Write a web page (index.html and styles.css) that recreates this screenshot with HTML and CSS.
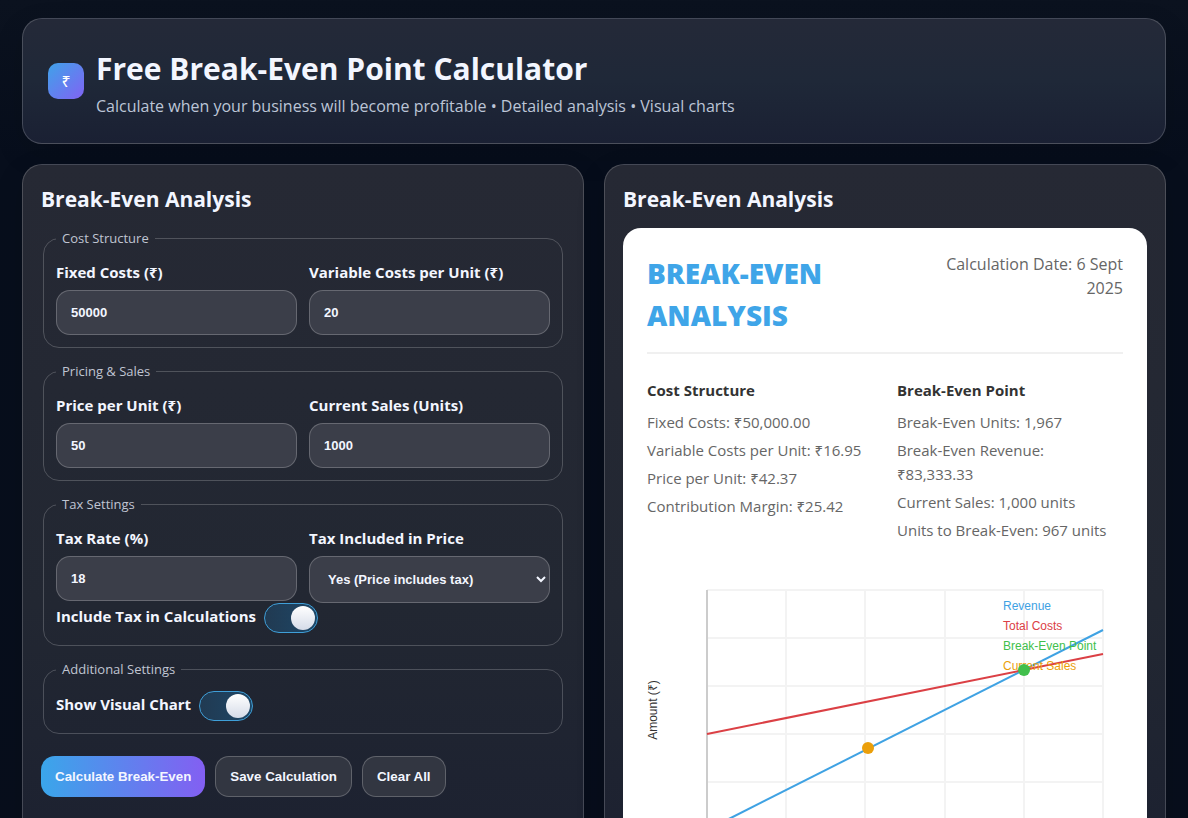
FILE: index.html
```html
<!DOCTYPE html>
<html lang="en">
<head>
  <meta charset="UTF-8" />
  <title>Free Break-Even Point Calculator</title>
  <meta name="viewport" content="width=device-width, initial-scale=1.0" />
  <link rel="stylesheet" href="styles.css">
</head>
<body>

  <div class="container">
    <header class="hero">
      <div class="logo">₹</div>
      <div>
        <h1>Free Break-Even Point Calculator</h1>
        <p class="subtitle">Calculate when your business will become profitable • Detailed analysis • Visual charts</p>
      </div>
    </header>

    <main class="layout">
      <section class="card">
        <h2>Break-Even Analysis</h2>

        <form id="calcForm">
          <fieldset>
            <legend>Cost Structure</legend>
            <div class="row">
              <div class="field">
                <label for="fixedCosts">Fixed Costs (₹)</label>
                <input type="text" inputmode="decimal" id="fixedCosts" value="50000" />
              </div>
              <div class="field">
                <label for="variableCosts">Variable Costs per Unit (₹)</label>
                <input type="text" inputmode="decimal" id="variableCosts" value="20" />
              </div>
            </div>
          </fieldset>

          <fieldset>
            <legend>Pricing &amp; Sales</legend>
            <div class="row">
              <div class="field">
                <label for="unitPrice">Price per Unit (₹)</label>
                <input type="text" inputmode="decimal" id="unitPrice" value="50" />
              </div>
              <div class="field">
                <label for="currentSales">Current Sales (Units)</label>
                <input type="text" inputmode="decimal" id="currentSales" value="1000" />
              </div>
            </div>
          </fieldset>

          <fieldset>
            <legend>Tax Settings</legend>
            <div class="row">
              <div class="field">
                <label for="taxRate">Tax Rate (%)</label>
                <input type="text" inputmode="decimal" id="taxRate" value="18" />
              </div>
              <div class="field">
                <label for="taxIncluded">Tax Included in Price</label>
                <select id="taxIncluded">
                  <option value="yes">Yes (Price includes tax)</option>
                  <option value="no">No (Price excludes tax)</option>
                </select>
              </div>
            </div>
            <div class="switch-row">
              <label for="includeTax">Include Tax in Calculations</label>
              <input type="checkbox" class="switch" id="includeTax" checked />
            </div>
          </fieldset>

          <fieldset>
            <legend>Additional Settings</legend>
            <div class="switch-row">
              <label for="showChart">Show Visual Chart</label>
              <input type="checkbox" class="switch" id="showChart" checked />
            </div>
          </fieldset>

          <div class="actions">
            <button type="button" class="btn btn-primary">Calculate Break-Even</button>
            <button type="button" class="btn">Save Calculation</button>
            <button type="reset" class="btn">Clear All</button>
          </div>
        </form>
      </section>

      <section class="card">
        <h2>Break-Even Analysis</h2>

        <div class="report">
          <div class="report-header">
            <h3 class="report-title">BREAK-EVEN ANALYSIS</h3>
            <p class="report-date">Calculation Date: 6 Sept 2025</p>
          </div>

          <div class="report-grid">
            <div>
              <h4>Cost Structure</h4>
              <p>Fixed Costs: ₹50,000.00</p>
              <p>Variable Costs per Unit: ₹16.95</p>
              <p>Price per Unit: ₹42.37</p>
              <p>Contribution Margin: ₹25.42</p>
            </div>
            <div>
              <h4>Break-Even Point</h4>
              <p>Break-Even Units: 1,967</p>
              <p>Break-Even Revenue: ₹83,333.33</p>
              <p>Current Sales: 1,000 units</p>
              <p>Units to Break-Even: 967 units</p>
            </div>
          </div>

          <svg class="chart" viewBox="0 0 476 300" role="img" aria-label="Break-even chart">
            <!-- grid -->
            <g stroke="#f3f3f3" stroke-width="2">
              <path d="M60 30H456M60 78H456M60 126H456M60 174H456M60 222H456" />
              <path d="M139 30V270M218 30V270M298 30V270M377 30V270M456 30V270" />
            </g>
            <path d="M60 30V270H456" fill="none" stroke="#ccc" stroke-width="2" />
            <!-- revenue and total costs -->
            <path d="M60 270L456 70" stroke="#3fa2e3" stroke-width="2" />
            <path d="M60 174L456 94" stroke="#db4045" stroke-width="2" />
            <g class="chart-text">
              <text x="356" y="50" fill="#3fa2e3">Revenue</text>
              <text x="356" y="70" fill="#db4045">Total Costs</text>
              <text x="356" y="90" fill="#41bf4c">Break-Even Point</text>
              <text x="356" y="110" fill="#eb9f0a">Current Sales</text>
              <text transform="translate(10 150) rotate(-90)" text-anchor="middle" fill="#333">Amount (₹)</text>
            </g>
            <circle cx="377" cy="110" r="6" fill="#41bf4c" />
            <circle cx="221" cy="188" r="6" fill="#eb9f0a" />
          </svg>
        </div>
      </section>
    </main>
  </div>

</body>
</html>
```
FILE: styles.css
```css
* {
  box-sizing: border-box;
}

body {
  margin: 0;
  min-height: 100vh;
  font-family: "Segoe UI", "Open Sans", "Noto Sans", sans-serif;
  font-size: 15px;
  line-height: 24px;
  color: #f3f6ff;
  background: linear-gradient(180deg, #0b121f 0, #070e1c 160px, #080e1c 100%);
}

h1, h2, h3, h4, p {
  margin: 0;
}

.container {
  max-width: 1200px;
  margin: 0 auto;
  padding: 18px 22px;
}

.hero {
  display: flex;
  align-items: center;
  gap: 12px;
  padding: 25px;
  margin-bottom: 20px;
  border: 1px solid rgba(255, 255, 255, 0.18);
  border-radius: 20px;
  background: linear-gradient(180deg, #242938, #1f2838 50%, #1a2033);
  box-shadow: 0 10px 30px rgba(0, 0, 0, 0.12);
}

.logo {
  display: grid;
  place-items: center;
  width: 36px;
  height: 36px;
  border-radius: 10px;
  font-size: 16px;
  color: #fff;
  background: linear-gradient(135deg, #3fa2e9, #8163f4);
}

.hero h1 {
  font-size: 30px;
  line-height: 50px;
  font-weight: 700;
}

.subtitle {
  font-size: 16px;
  color: #bcc5d6;
}

.layout {
  display: grid;
  grid-template-columns: 1fr 1fr;
  gap: 20px;
}

.card {
  padding: 18px;
  border: 1px solid rgba(255, 255, 255, 0.18);
  border-radius: 20px;
  background: linear-gradient(180deg, #262934, #222732 60%, #1b2030);
  box-shadow: 0 10px 30px rgba(0, 0, 0, 0.12);
}

.card h2 {
  margin-bottom: 12px;
  font-size: 21px;
  line-height: 33px;
}

fieldset {
  min-width: 0;
  margin: 0 2px 13px;
  padding: 12px;
  border: 1px solid rgba(255, 255, 255, 0.2);
  border-radius: 16px;
}

legend {
  padding: 0 6px;
  font-size: 13px;
  line-height: 20px;
  color: #c0c5d2;
}

.row {
  display: grid;
  grid-template-columns: 1fr 1fr;
  align-items: start;
  gap: 12px;
}

label {
  font-weight: 700;
}

.field label {
  display: block;
  margin-bottom: 6px;
}

.field input,
.field select {
  display: block;
  width: 100%;
  height: 45px;
  padding: 14px;
  border: 1px solid rgba(255, 255, 255, 0.22);
  border-radius: 14px;
  font: 600 13px "Liberation Sans", Arial, sans-serif;
  color: #f3f6ff;
  background-color: #3b3e49;
}

.field select {
  height: 47px;
  padding-right: 0;
}

.switch-row {
  display: flex;
  align-items: flex-start;
  gap: 8px;
  line-height: 26px;
}

.switch {
  appearance: none;
  width: 54px;
  height: 30px;
  margin: 0;
  padding: 2px;
  border: 1px solid #3f9fd8;
  border-radius: 15px;
  background: linear-gradient(90deg, #213a52, #1d4767);
  cursor: pointer;
}

.switch::before {
  content: "";
  display: block;
  width: 24px;
  height: 24px;
  border-radius: 50%;
  background: linear-gradient(180deg, #fff, #d5dbe8);
}

.switch:checked::before {
  margin-left: auto;
}

.actions {
  display: flex;
  gap: 10px;
  padding-top: 9px;
}

.btn {
  height: 41px;
  padding: 0 14px;
  border: 1px solid rgba(255, 255, 255, 0.22);
  border-radius: 14px;
  font-family: "Liberation Sans", Arial, sans-serif;
  font-weight: 700;
  color: #f3f6ff;
  background: #323641;
  cursor: pointer;
}

.btn-primary {
  border: none;
  background: linear-gradient(90deg, #3aa6ea, #835ff2);
}

.report {
  padding: 24px;
  border-radius: 18px;
  color: #666;
  background: #fff;
}

.report-header {
  display: flex;
  justify-content: space-between;
  padding-bottom: 16px;
  margin-bottom: 24px;
  border-bottom: 2px solid #f0f0f0;
}

.report-title {
  font-size: 28px;
  line-height: 42px;
  font-weight: 800;
  color: #3fa5e8;
}

.report-date {
  font-size: 16px;
  text-align: right;
}

.report-grid {
  display: grid;
  grid-template-columns: 1fr 1fr;
  gap: 24px;
  margin-bottom: 14px;
}

.report-grid h4 {
  margin-bottom: 8px;
  font-size: 15px;
  color: #333;
}

.report-grid p {
  margin-bottom: 4px;
}

.chart {
  display: block;
  width: 100%;
}

.chart-text {
  font: 12px "Liberation Sans", Arial, sans-serif;
}
```
